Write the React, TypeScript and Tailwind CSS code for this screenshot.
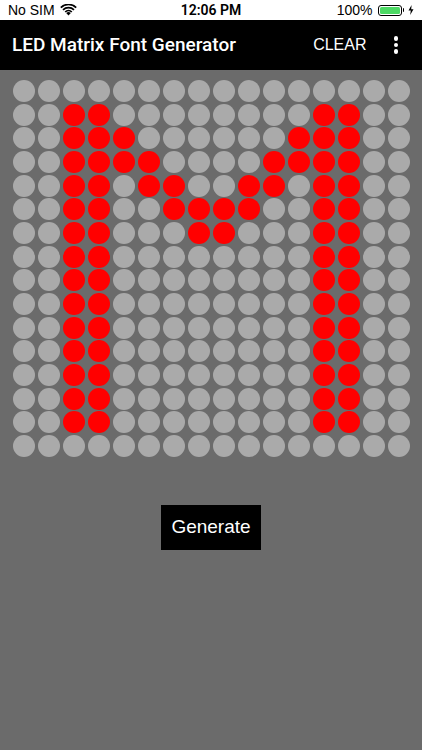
import React from "react";

const ROWS: number[][] = [
  [],
  [2, 3, 12, 13],
  [2, 3, 4, 11, 12, 13],
  [2, 3, 4, 5, 10, 11, 12, 13],
  [2, 3, 5, 6, 9, 10, 12, 13],
  [2, 3, 6, 7, 8, 9, 12, 13],
  [2, 3, 7, 8, 12, 13],
  [2, 3, 12, 13],
  [2, 3, 12, 13],
  [2, 3, 12, 13],
  [2, 3, 12, 13],
  [2, 3, 12, 13],
  [2, 3, 12, 13],
  [2, 3, 12, 13],
  [2, 3, 12, 13],
  [],
];

function Wifi() {
  return (
    <svg width="17" height="12" viewBox="0 0 17 12">
      <path d="M8.5 11.5 L6.2 9.1 A3.3 3.3 0 0 1 10.8 9.1 Z" fill="#000" />
      <path d="M4.6 7.4 A5.6 5.6 0 0 1 12.4 7.4 L11.2 8.6 A3.9 3.9 0 0 0 5.8 8.6 Z" fill="#000" />
      <path d="M2.4 5.2 A8.8 8.8 0 0 1 14.6 5.2 L13.4 6.4 A7.1 7.1 0 0 0 3.6 6.4 Z" fill="#000" />
      <path d="M0.2 3 A11.9 11.9 0 0 1 16.8 3 L15.6 4.2 A10.2 10.2 0 0 0 1.4 4.2 Z" fill="#000" />
    </svg>
  );
}

function Battery() {
  return (
    <div className="flex items-center">
      <div className="w-[24px] h-[11px] rounded-[3px] border border-[#000] p-[1px] flex">
        <div className="flex-1 rounded-[1.5px] bg-[#4cd964]" />
      </div>
      <div className="w-[1.5px] h-[4px] bg-[#000] rounded-r-[1px] ml-[1px]" />
      <svg width="6" height="10" viewBox="0 0 6 10" className="ml-[4px]">
        <path d="M3.6 0 L0.5 5.6 L2.8 5.6 L2.2 10 L5.5 4.2 L3.2 4.2 Z" fill="#000" />
      </svg>
    </div>
  );
}

export default function App() {
  return (
    <div
      className="w-[422px] h-[750px] bg-[#6b6b6b] flex flex-col"
      style={{ fontFamily: '"Liberation Sans", Arial, sans-serif' }}
    >
      <div className="h-[20px] bg-white flex items-center justify-between px-[8px] text-[14px] text-black relative">
        <div className="flex items-center gap-[5px]">
          <span>No SIM</span>
          <Wifi />
        </div>
        <div className="absolute left-0 right-0 text-center text-[14px] leading-[20px]" style={{ fontFamily: 'Roboto, "Liberation Sans", sans-serif', fontWeight: 600 }}>
          12:06 PM
        </div>
        <div className="flex items-center gap-[5px]">
          <span>100%</span>
          <Battery />
        </div>
      </div>
      <div className="h-[50px] bg-black flex items-center pl-[12px] pr-[24px] text-white">
        <div className="flex-1 text-[19px] font-medium" style={{ fontFamily: 'Roboto, "Liberation Sans", sans-serif' }}>
          LED Matrix Font Generator
        </div>
        <div className="text-[16px] mr-[27px]">CLEAR</div>
        <div className="flex flex-col gap-[2.2px]">
          <div className="w-[4.5px] h-[4.5px] rounded-full bg-white" />
          <div className="w-[4.5px] h-[4.5px] rounded-full bg-white" />
          <div className="w-[4.5px] h-[4.5px] rounded-full bg-white" />
        </div>
      </div>
      <div className="mx-auto mt-[9px] grid grid-cols-[repeat(16,25px)] auto-rows-[23.7px]">
        {ROWS.map((row, r) =>
          Array.from({ length: 16 }, (_, c) => (
            <div key={`${r}-${c}`} className="flex items-center justify-center">
              <div
                className={
                  row.includes(c)
                    ? "w-[22px] h-[22px] rounded-full bg-[#ff0000]"
                    : "w-[22px] h-[22px] rounded-full bg-[#aaaaaa]"
                }
              />
            </div>
          ))
        )}
      </div>
      <div className="mt-[47px] flex justify-center">
        <div className="w-[100px] h-[45px] bg-black text-white flex items-center justify-center text-[19px]">
          Generate
        </div>
      </div>
    </div>
  );
}
